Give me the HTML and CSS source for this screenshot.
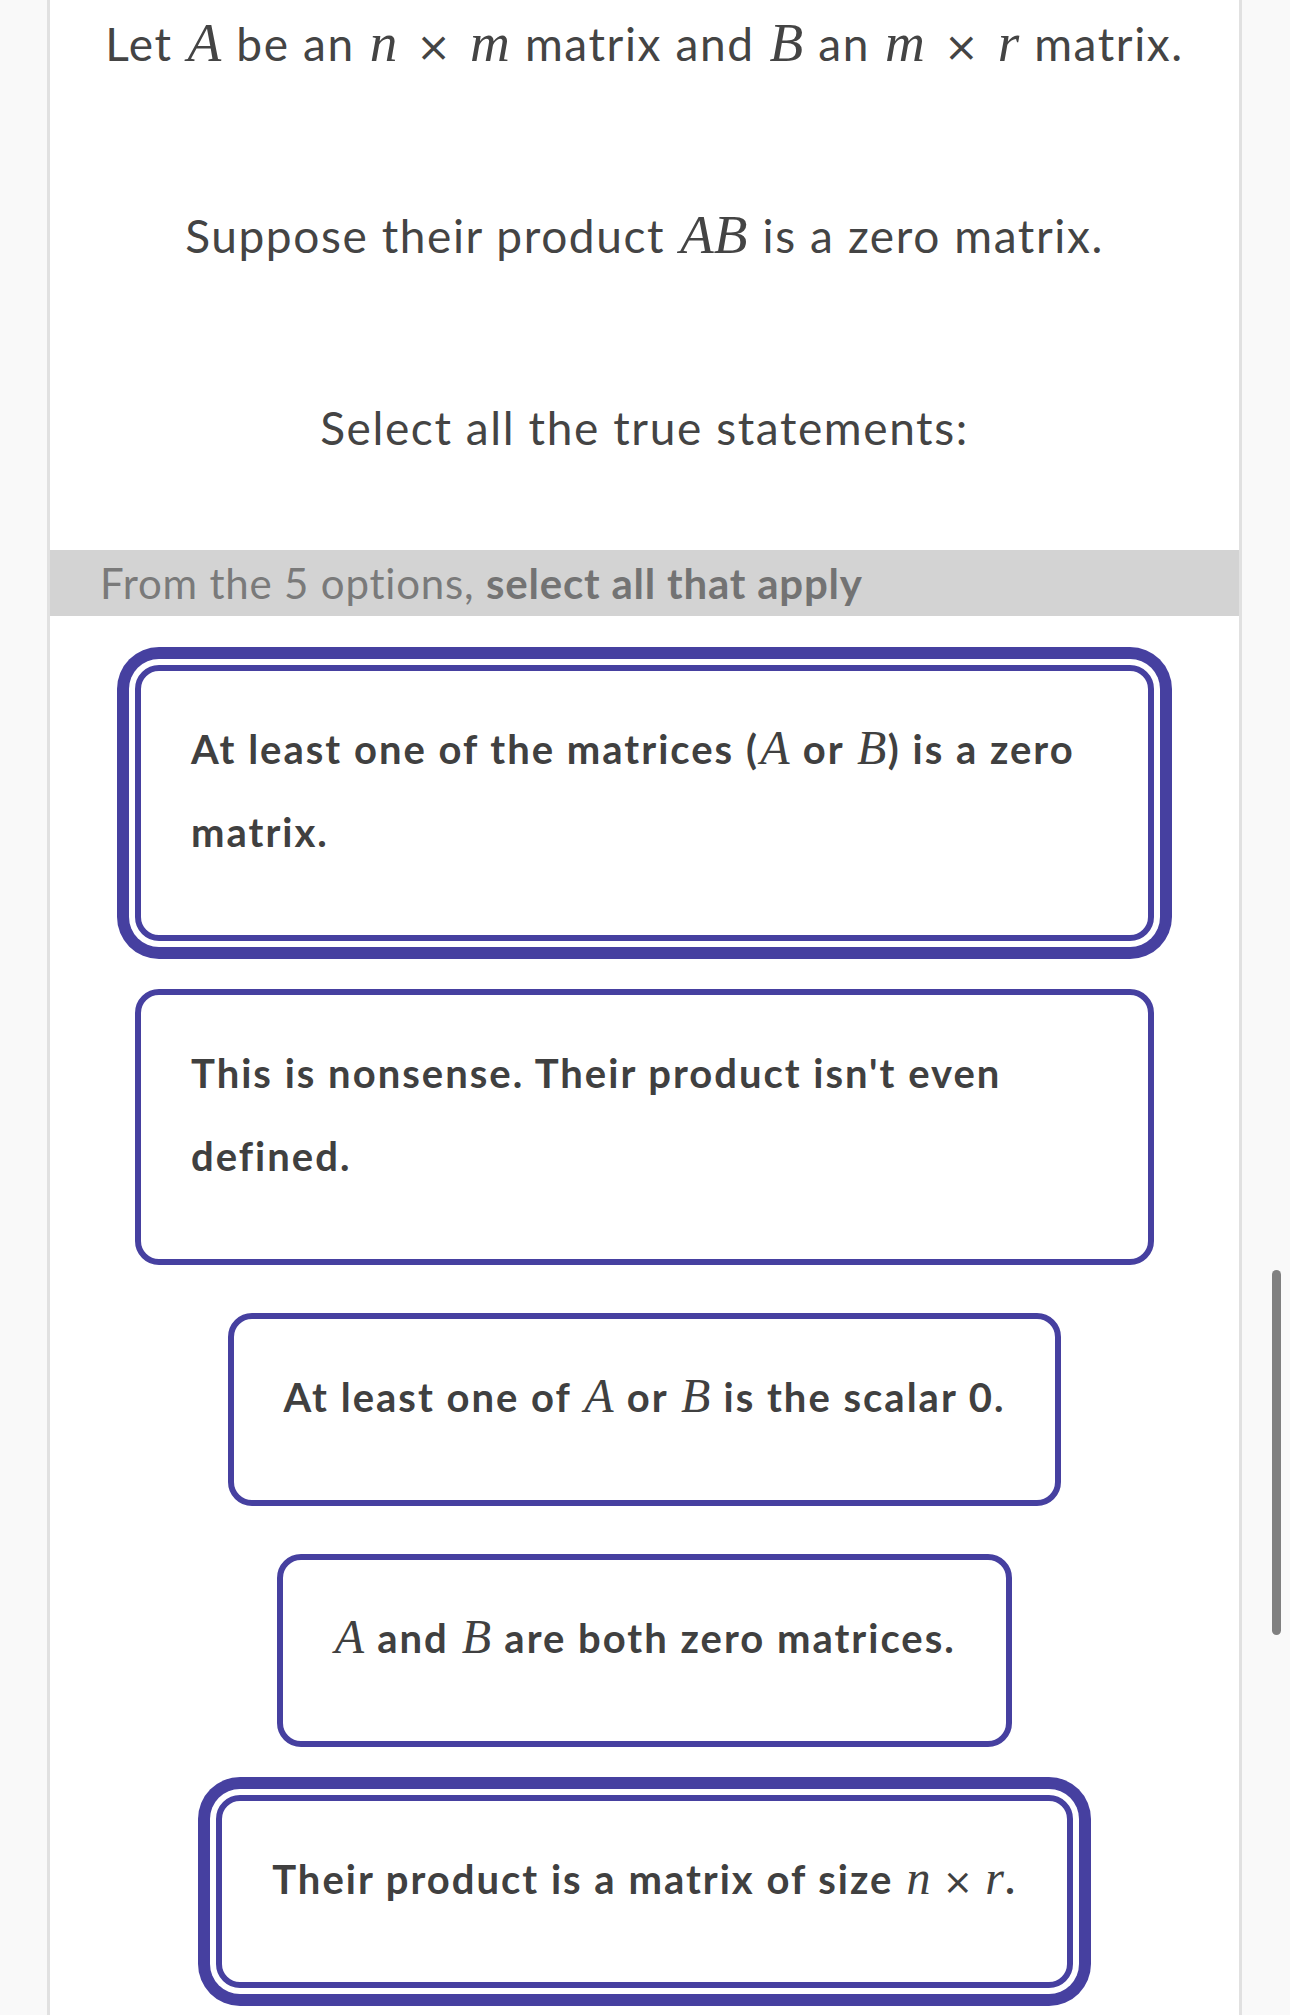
FILE: index.html
```html
<!DOCTYPE html>
<html lang="en">
<head>
<meta charset="utf-8">
<title>Matrix product question</title>
<link rel="stylesheet" href="styles.css">
</head>
<body>
<div class="panel">
  <div class="prompt">
    <p>Let <span class="m">A</span> be an <span class="m">n</span><span class="op">×</span><span class="m">m</span> matrix and <span class="m">B</span> an <span class="m">m</span><span class="op">×</span><span class="m">r</span> matrix.</p>
    <p>Suppose their product <span class="m">AB</span> is a zero matrix.</p>
    <p>Select all the true statements:</p>
  </div>
  <div class="hint"><span>From the 5 options,</span> <strong>select all that apply</strong></div>
  <div class="options">
    <div class="option selected">At least one of the matrices (<span class="m">A</span> or <span class="m">B</span>) is a zero matrix.</div>
    <div class="option">This is nonsense. Their product isn't even defined.</div>
    <div class="option">At least one of <span class="m">A</span> or <span class="m">B</span> is the scalar 0.</div>
    <div class="option"><span class="m">A</span> and <span class="m">B</span> are both zero matrices.</div>
    <div class="option selected">Their product is a matrix of size <span class="m">n</span><span class="op">×</span><span class="m">r</span>.</div>
  </div>
</div>
<div class="scrollbar"></div>
</body>
</html>
```
FILE: styles.css
```css
html, body {
  margin: 0;
  padding: 0;
}
body {
  background: #f9f9f9;
  font-family: Lato, "Noto Sans", sans-serif;
  color: #414141;
  height: 2015px;
  overflow: hidden;
}
.panel {
  margin-left: 47px;
  width: 1189px;
  border-left: 3px solid #e1e1e1;
  border-right: 3px solid #e1e1e1;
  background: #fff;
  min-height: 2015px;
}
.prompt {
  padding-top: 14px;
  text-align: center;
  font-size: 46px;
  line-height: 60px;
  letter-spacing: 1.6px;
  color: #444;
}
.prompt p {
  margin: 0 0 132px;
}
.prompt p:last-child {
  margin-bottom: 92px;
}
.m {
  font-family: "Liberation Serif", "DejaVu Serif", serif;
  font-style: italic;
  font-weight: normal;
  font-size: 1.2em;
  letter-spacing: 0;
  line-height: 1;
  padding: 0 0.03em;
}
.op {
  font-family: "DejaVu Sans", sans-serif;
  font-weight: normal;
  font-size: 0.9em;
  letter-spacing: 0;
  line-height: 1;
  margin: 0 0.42em;
}
.option .op {
  margin: 0 0.3em;
}
.hint {
  background: #d3d3d3;
  height: 66px;
  line-height: 66px;
  padding-left: 50px;
  font-size: 42px;
  letter-spacing: 0.8px;
  color: #7a7a7a;
}
.hint strong {
  font-weight: 700;
  color: #737373;
}
.options {
  display: flex;
  flex-direction: column;
  align-items: center;
  gap: 48px;
  padding-top: 49px;
}
.option {
  box-sizing: border-box;
  max-width: 1019px;
  border: 6px solid #4640a0;
  border-radius: 24px;
  padding: 37px 50px 61px;
  font-size: 40px;
  line-height: 83px;
  letter-spacing: 2px;
  font-weight: 700;
  color: #404040;
  background: #fff;
}
.option.selected {
  box-shadow: 0 0 0 6px #fff, 0 0 0 18px #4640a0;
}
.scrollbar {
  position: fixed;
  left: 1272px;
  top: 1270px;
  width: 9px;
  height: 365px;
  border-radius: 5px;
  background: #808080;
}
```
